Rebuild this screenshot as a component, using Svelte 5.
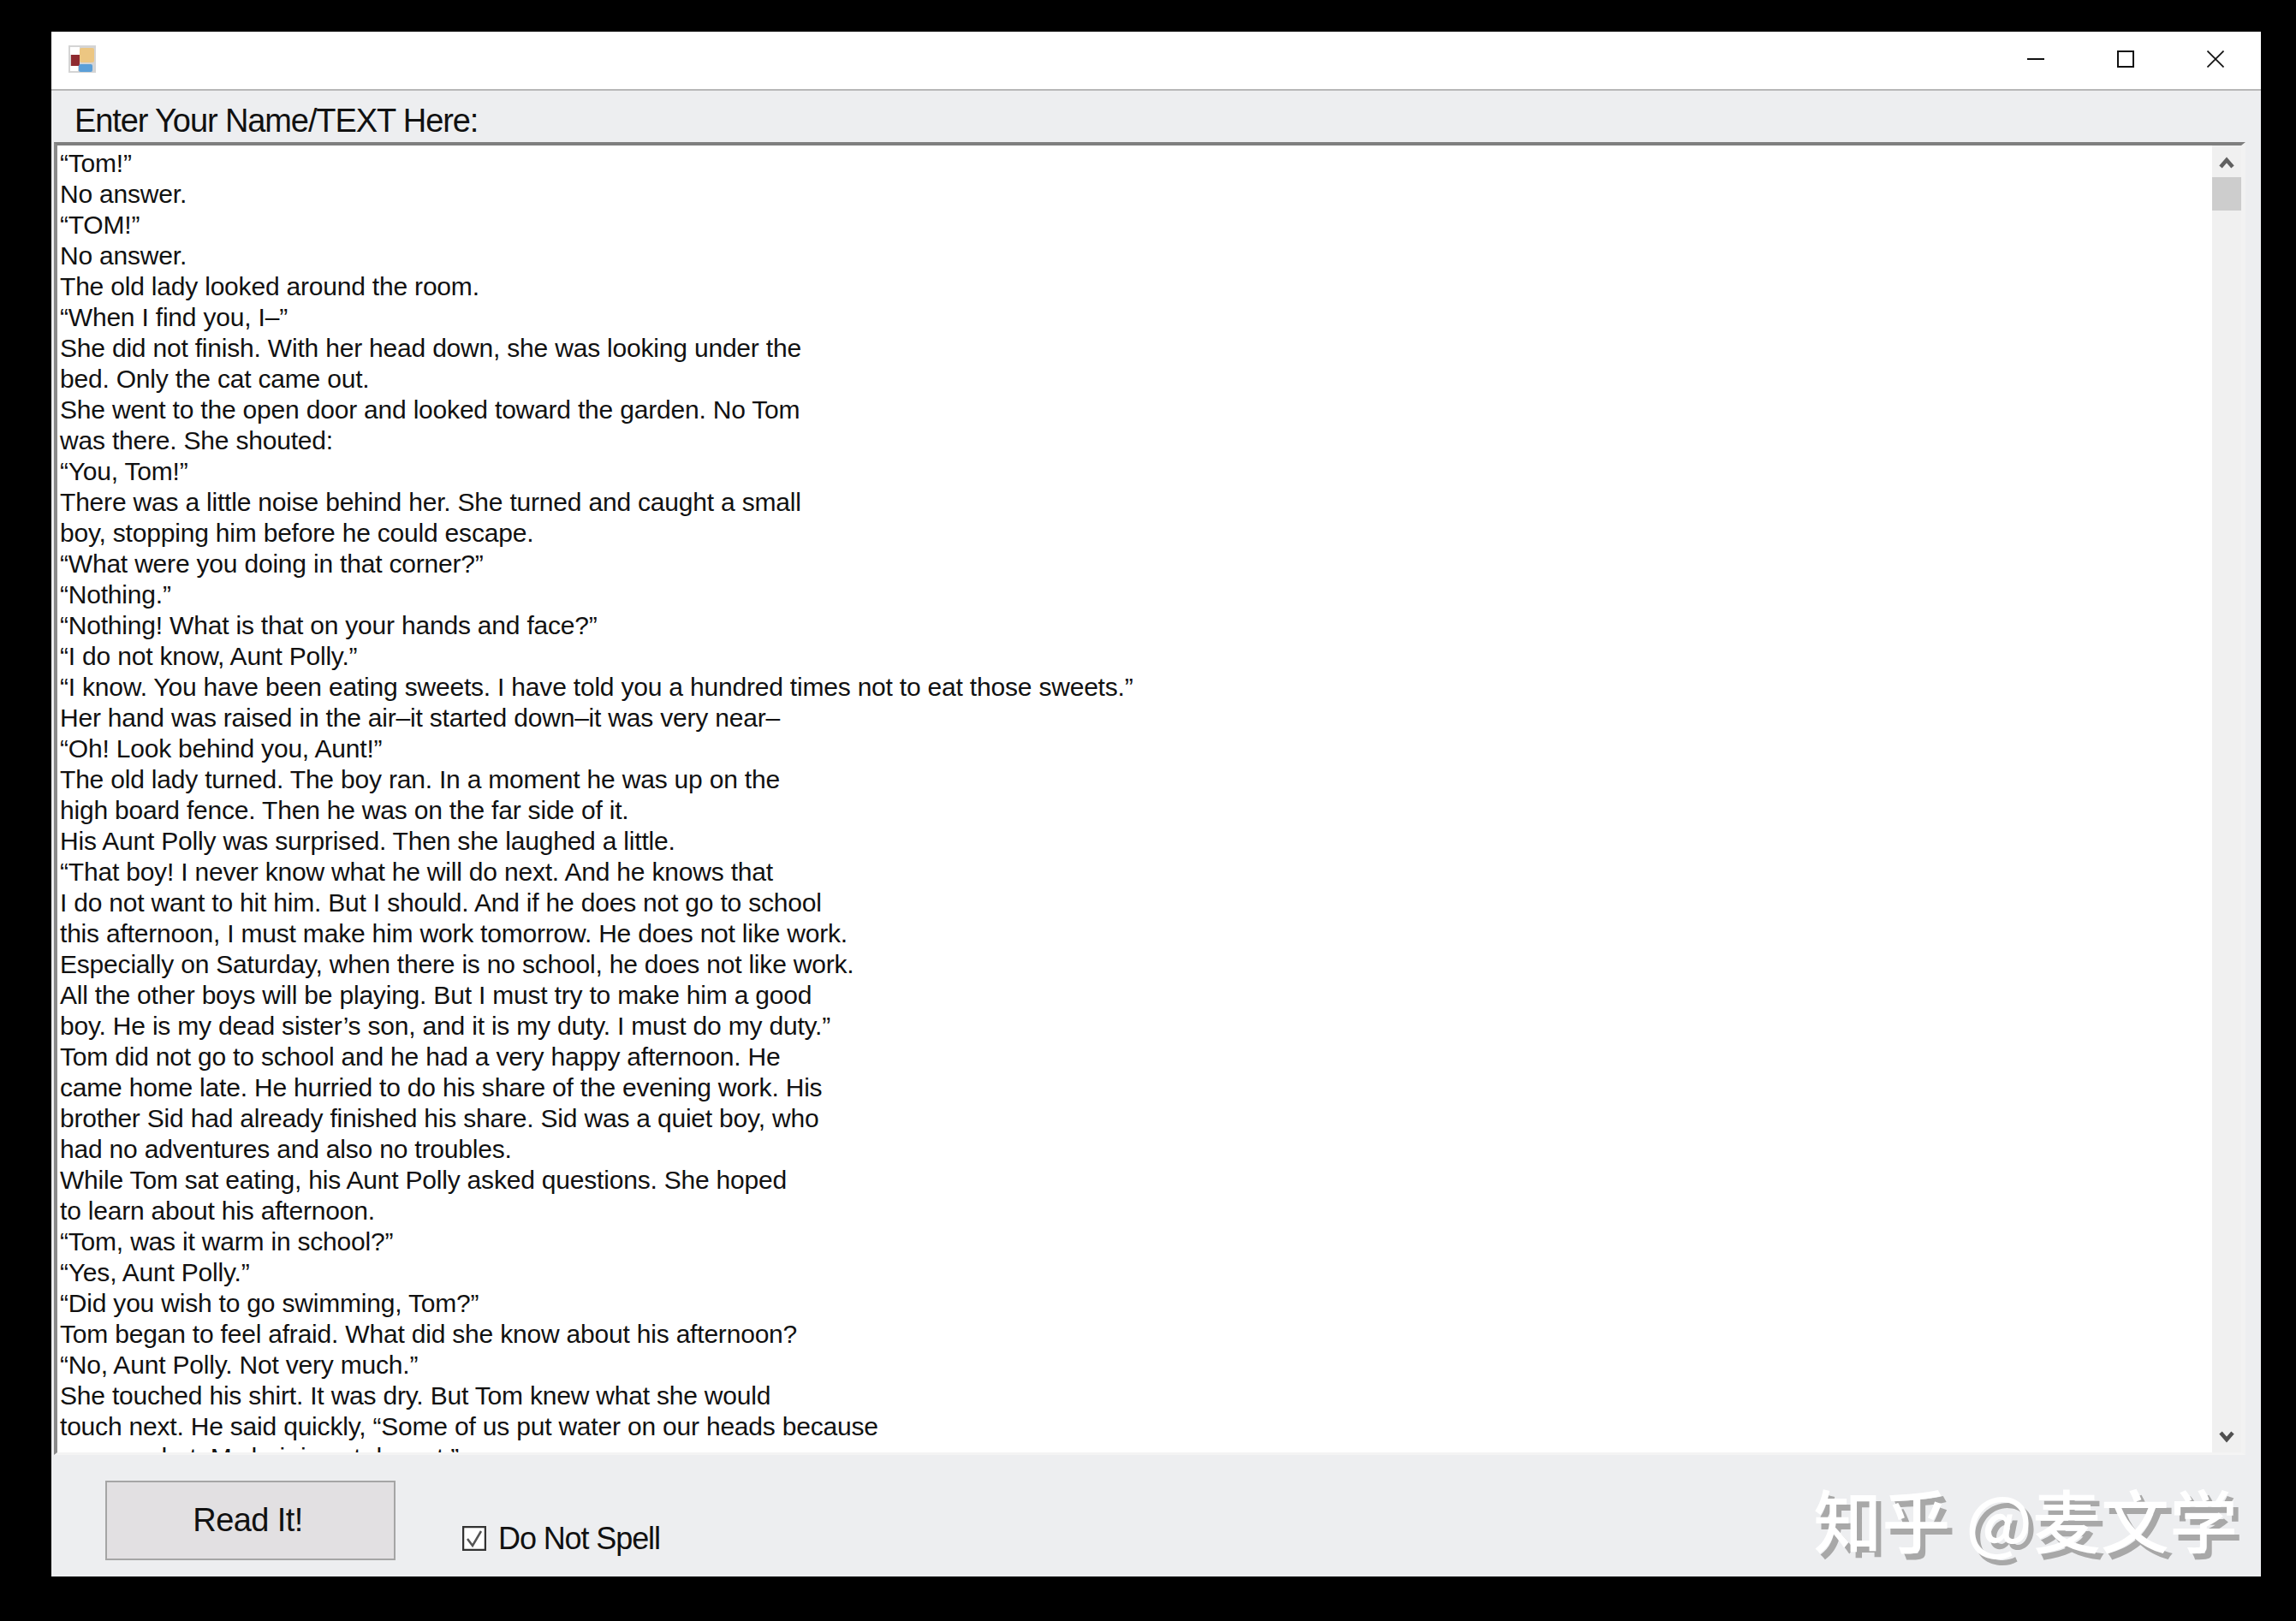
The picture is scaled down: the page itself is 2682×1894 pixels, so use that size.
<script lang="ts">
    const lines = [
        "“Tom!”",
        "No answer.",
        "“TOM!”",
        "No answer.",
        "The old lady looked around the room.",
        "“When I find you, I–”",
        "She did not finish. With her head down, she was looking under the",
        "bed. Only the cat came out.",
        "She went to the open door and looked toward the garden. No Tom",
        "was there. She shouted:",
        "“You, Tom!”",
        "There was a little noise behind her. She turned and caught a small",
        "boy, stopping him before he could escape.",
        "“What were you doing in that corner?”",
        "“Nothing.”",
        "“Nothing! What is that on your hands and face?”",
        "“I do not know, Aunt Polly.”",
        "“I know. You have been eating sweets. I have told you a hundred times not to eat those sweets.”",
        "Her hand was raised in the air–it started down–it was very near–",
        "“Oh! Look behind you, Aunt!”",
        "The old lady turned. The boy ran. In a moment he was up on the",
        "high board fence. Then he was on the far side of it.",
        "His Aunt Polly was surprised. Then she laughed a little.",
        "“That boy! I never know what he will do next. And he knows that",
        "I do not want to hit him. But I should. And if he does not go to school",
        "this afternoon, I must make him work tomorrow. He does not like work.",
        "Especially on Saturday, when there is no school, he does not like work.",
        "All the other boys will be playing. But I must try to make him a good",
        "boy. He is my dead sister’s son, and it is my duty. I must do my duty.”",
        "Tom did not go to school and he had a very happy afternoon. He",
        "came home late. He hurried to do his share of the evening work. His",
        "brother Sid had already finished his share. Sid was a quiet boy, who",
        "had no adventures and also no troubles.",
        "While Tom sat eating, his Aunt Polly asked questions. She hoped",
        "to learn about his afternoon.",
        "“Tom, was it warm in school?”",
        "“Yes, Aunt Polly.”",
        "“Did you wish to go swimming, Tom?”",
        "Tom began to feel afraid. What did she know about his afternoon?",
        "“No, Aunt Polly. Not very much.”",
        "She touched his shirt. It was dry. But Tom knew what she would",
        "touch next. He said quickly, “Some of us put water on our heads because",
        "we were hot. My hair is not dry yet.”"
    ]
</script>

<div class="page">
    <div class="window">
        <div class="titlebar">
            <svg class="appicon" width="32" height="32" viewBox="0 0 32 32">
                <rect width="32" height="32" fill="#d4d4d4" />
                <rect x="2" y="2" width="11" height="9" fill="#fff" />
                <rect x="2" y="24" width="9" height="6" fill="#fff" />
                <rect x="13" y="3" width="17" height="17" rx="2" fill="#ecc682" />
                <rect x="3" y="11" width="10" height="13" fill="#8e2a30" />
                <rect x="12" y="22" width="16" height="9" rx="2" fill="#5b9fd8" />
            </svg>
            <div class="controls">
                <svg width="20" height="20" viewBox="0 0 20 20"><path d="M0 10H20" stroke="#111" stroke-width="2" /></svg>
                <svg width="20" height="20" viewBox="0 0 20 20"><rect x="1" y="1" width="18" height="18" fill="none" stroke="#111" stroke-width="2" /></svg>
                <svg width="20" height="20" viewBox="0 0 20 20"><path d="M0.5 0.5L19.5 19.5M19.5 0.5L0.5 19.5" stroke="#111" stroke-width="1.7" /></svg>
            </div>
        </div>

        <div class="label">Enter Your Name/TEXT Here:</div>

        <div class="textbox">
            <div class="content">
                {#each lines as line}
                    <div class="line">{line}</div>
                {/each}
            </div>
            <div class="scrollbar">
                <svg class="arrow" width="18" height="15" viewBox="0 0 18 15"><path d="M2 13L9 5L16 13" fill="none" stroke="#606060" stroke-width="4.5" /></svg>
                <div class="thumb"></div>
                <div class="track"></div>
                <svg class="arrow" width="18" height="15" viewBox="0 0 18 15"><path d="M2 2L9 10L16 2" fill="none" stroke="#505050" stroke-width="4.5" /></svg>
            </div>
        </div>

        <div class="footer">
            <button class="readit">Read It!</button>
            <label class="check">
                <svg class="box" width="28" height="29" viewBox="0 0 28 29">
                    <rect x="1" y="1" width="26" height="27" fill="#fff" stroke="#333" stroke-width="2.5" />
                    <path d="M6 15L12 23L22 6" fill="none" stroke="#555" stroke-width="2.5" />
                </svg>
                <span>Do Not Spell</span>
            </label>
            <div class="watermark">知乎 @麦文学</div>
        </div>
    </div>
</div>

<style>
    :global(body) {
        background: #000;
    }

    .page {
        width: 2682px;
        height: 1894px;
        padding: 37px 41px 52px 60px;
        box-sizing: border-box;
        background: #000;
        font-family: "Liberation Sans", Arial, sans-serif;
        color: #111;
    }

    .window {
        height: 100%;
        background: #edeef0;
        display: flex;
        flex-direction: column;
    }

    .titlebar {
        height: 69px;
        box-sizing: border-box;
        background: #fff;
        border-bottom: 2px solid #b8b8b8;
        display: flex;
        align-items: center;
        justify-content: space-between;
        padding: 0 43px 4px 20px;
        flex-shrink: 0;
    }

    .controls {
        display: flex;
        gap: 85px;
    }

    .label {
        height: 60px;
        padding: 13px 0 0 27px;
        box-sizing: border-box;
        font-size: 38px;
        letter-spacing: -1.1px;
        line-height: 44px;
    }

    .textbox {
        height: 1534px;
        margin: 0 18px 0 3px;
        border-top: 4px solid #7f7f7f;
        border-left: 4px solid #8a8a8a;
        border-right: 5px solid #f2f2f2;
        border-bottom: 3px solid #f4f4f4;
        background: #fff;
        display: flex;
        box-sizing: border-box;
        overflow: hidden;
    }

    .content {
        flex: 1;
        padding: 3px 0 0 3px;
        font-size: 30px;
        line-height: 36px;
        letter-spacing: -0.2px;
        overflow: hidden;
    }

    .line {
        height: 36px;
        white-space: pre;
    }

    .scrollbar {
        width: 34px;
        background: #f0f0f0;
        display: flex;
        flex-direction: column;
        align-items: center;
        flex-shrink: 0;
    }

    .arrow {
        flex-shrink: 0;
        margin: 12px 0 10px;
    }

    .thumb {
        width: 100%;
        height: 39px;
        background: #cdcdcd;
        flex-shrink: 0;
    }

    .track {
        flex: 1;
    }

    .footer {
        flex: 1;
        position: relative;
        display: flex;
        align-items: flex-start;
        padding: 30px 0 0 63px;
    }

    .readit {
        width: 339px;
        height: 93px;
        padding: 0 6px 0 0;
        background: #e2e0e2;
        border: 2px solid #a5a5a5;
        font-family: inherit;
        font-size: 38px;
        letter-spacing: -0.6px;
        color: #111;
    }

    .check {
        display: flex;
        align-items: center;
        gap: 14px;
        margin: 53px 0 0 78px;
        font-size: 36px;
        line-height: 29px;
        letter-spacing: -1.1px;
    }

    .box {
        flex-shrink: 0;
    }

    .watermark {
        position: absolute;
        right: 27px;
        top: 28px;
        font-family: "Noto Sans CJK SC", sans-serif;
        font-size: 80px;
        line-height: 90px;
        font-weight: 500;
        color: #fff;
        text-shadow: 6px 7px 0 #a8a8a8;
    }
</style>
